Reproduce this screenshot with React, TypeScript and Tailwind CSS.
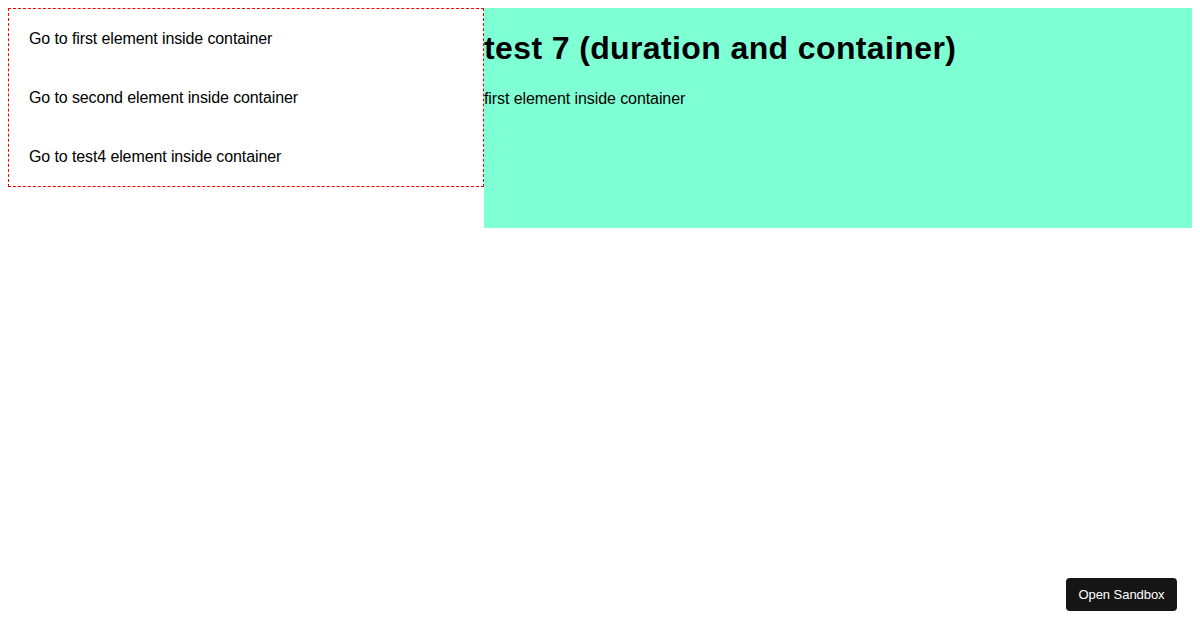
export default function App() {
  const links = [
    "Go to first element inside container",
    "Go to second element inside container",
    "Go to test4 element inside container",
  ];

  return (
    <div className="min-h-[630px] bg-white p-2 text-black font-['Liberation_Sans',Arial,sans-serif]">
      <div className="flex items-start">
        {/* nav panel */}
        <div className="w-[476px] h-[179px] border border-dashed border-[#ff0000] flex flex-col pt-px">
          {links.map((label) => (
            <a key={label} href="#" className="h-[59px] flex items-center pl-5 text-base tracking-[-0.11px]">
              {label}
            </a>
          ))}
        </div>

        {/* container */}
        <div className="flex-1 h-[220px] bg-[#7fffd4]">
          <h1 className="mt-[22px] text-[32px] leading-[37px] font-bold tracking-[0.38px]">test 7 (duration and container)</h1>
          <p className="mt-[23px] text-base leading-[18px] tracking-[-0.08px]">first element inside container</p>
        </div>
      </div>

      <button className="fixed right-[23px] bottom-[19px] w-[111px] h-[33px] rounded-[4px] bg-[#151515] text-white text-[13px] tracking-[-0.05px] font-['Liberation_Sans',Arial,sans-serif]">
        Open Sandbox
      </button>
    </div>
  );
}
